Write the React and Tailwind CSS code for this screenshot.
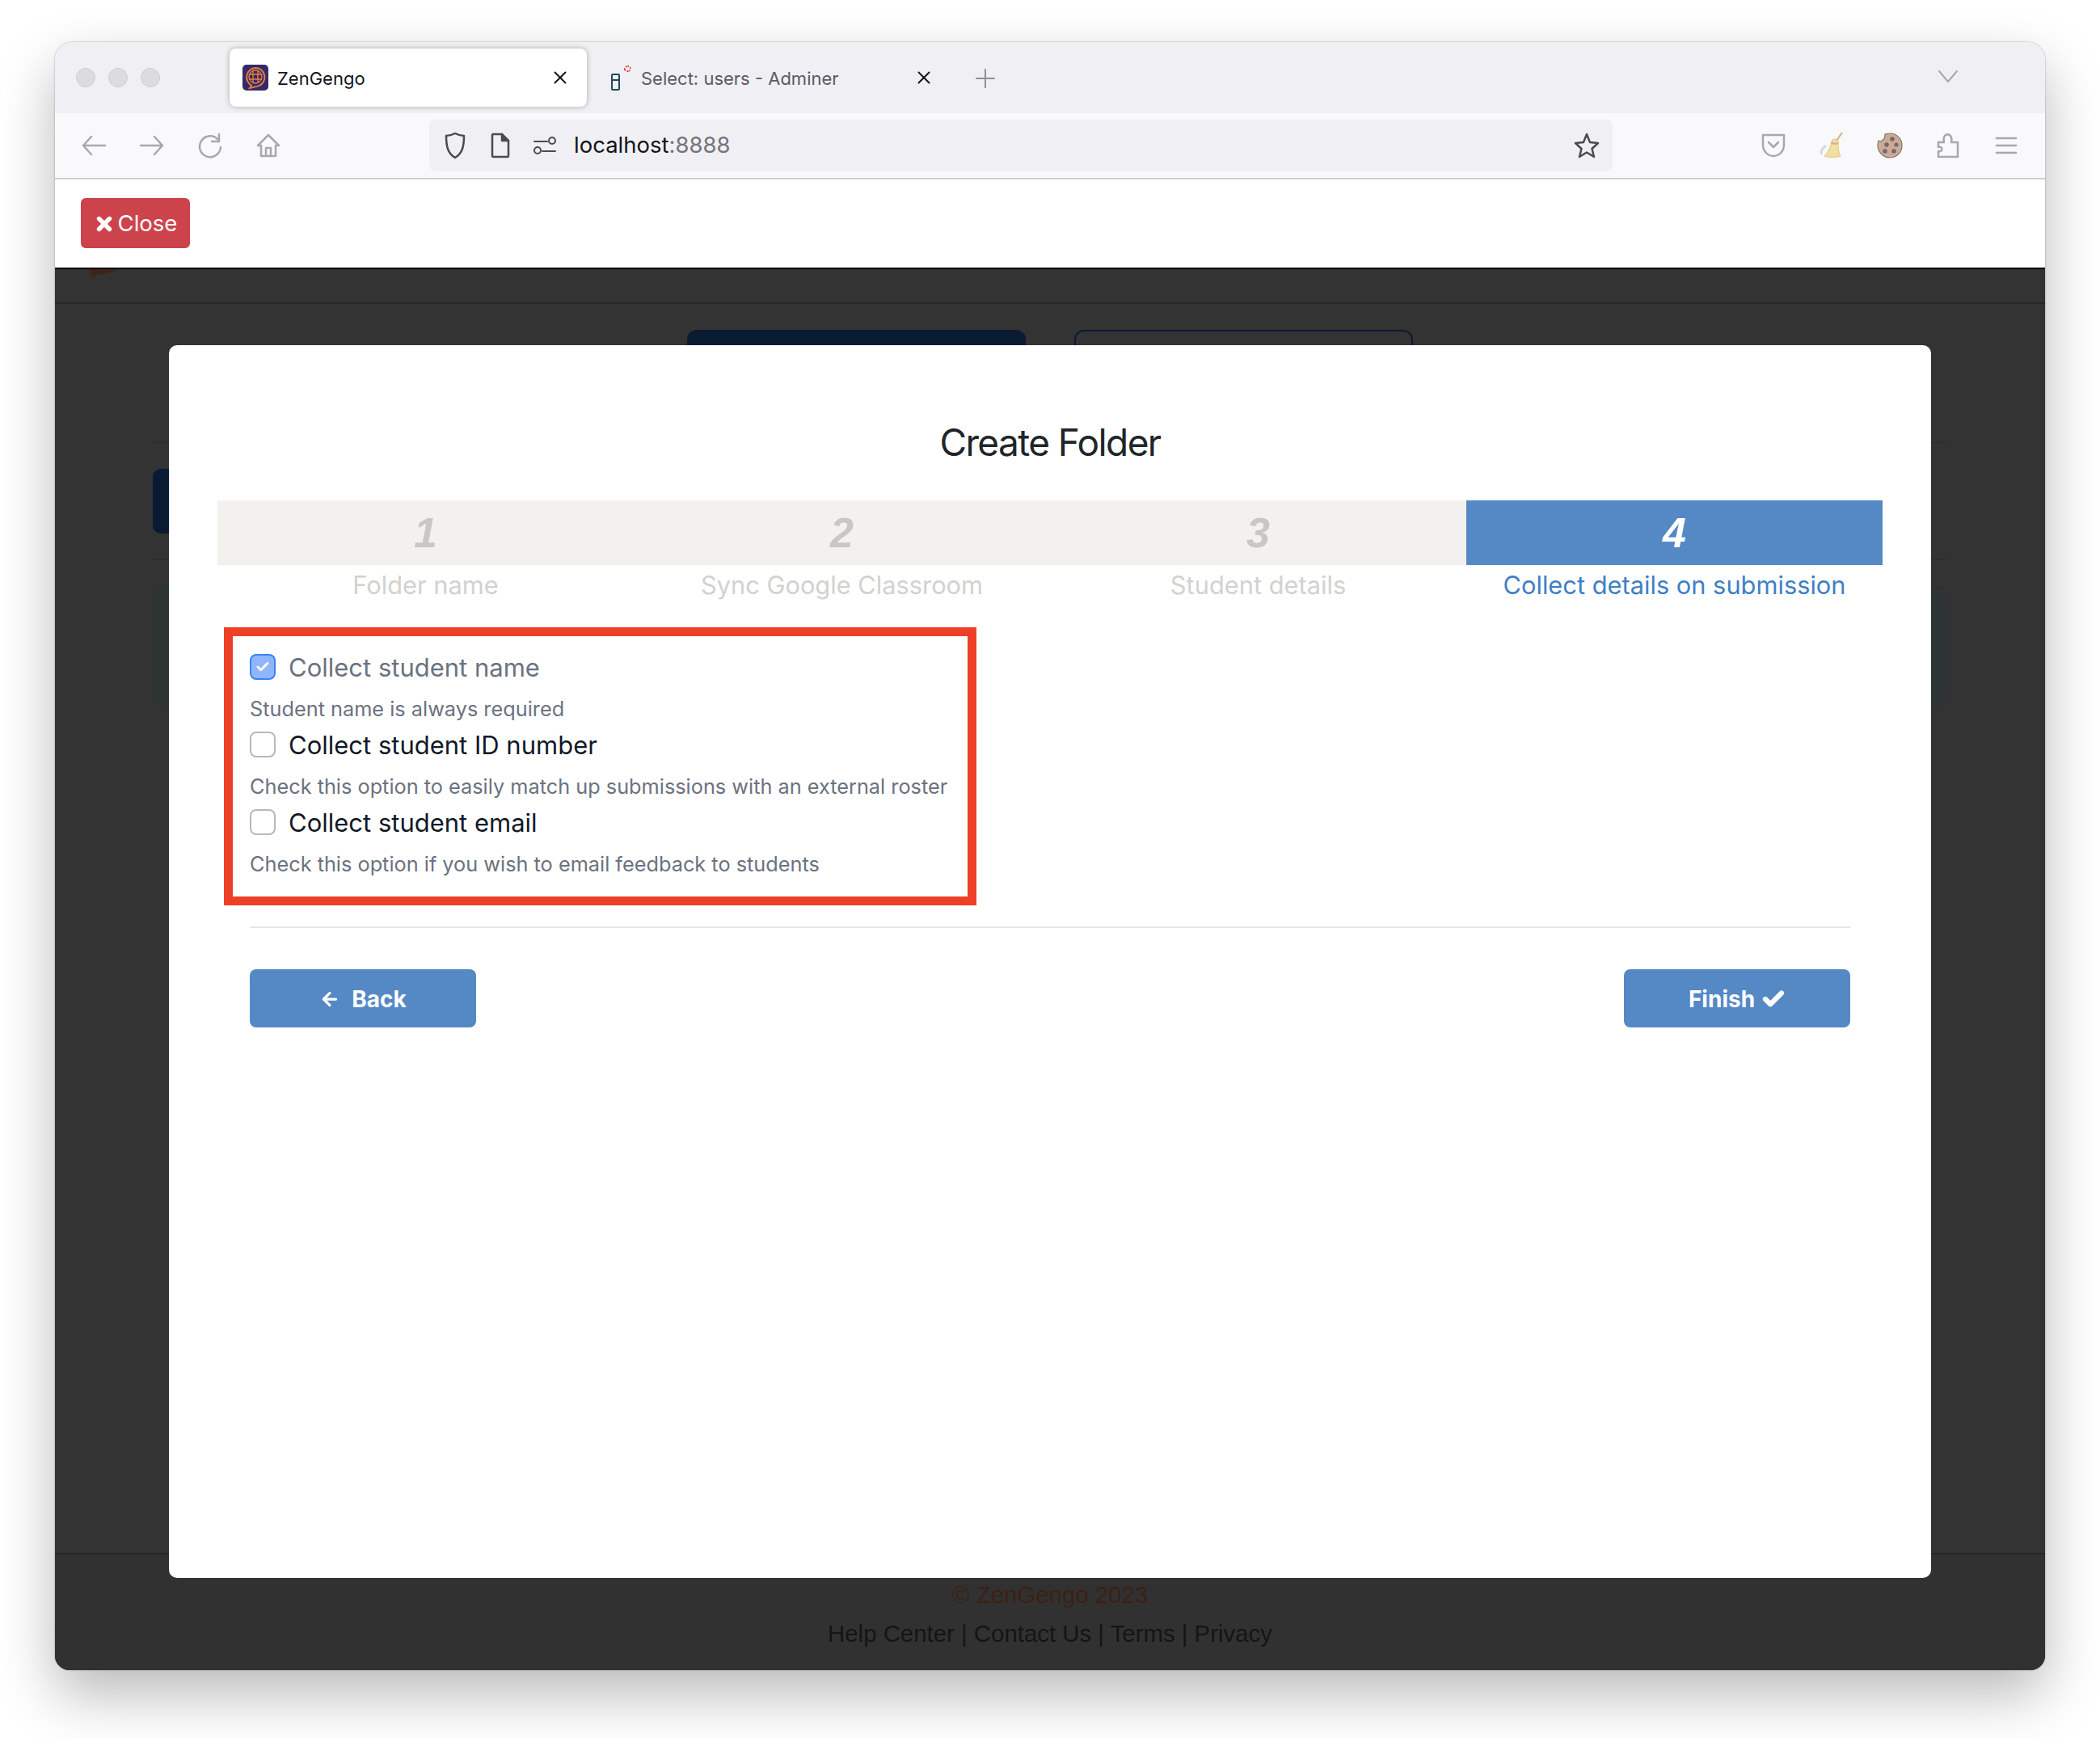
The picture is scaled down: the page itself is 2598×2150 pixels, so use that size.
import { Check, ArrowLeft, X } from "lucide-react";

const sans = "font-['Inter','Liberation_Sans',sans-serif]";

const steps = [
  { num: "1", label: "Folder name" },
  { num: "2", label: "Sync Google Classroom" },
  { num: "3", label: "Student details" },
  { num: "4", label: "Collect details on submission", active: true },
];

const options = [
  { title: "Collect student name", hint: "Student name is always required", checked: true },
  { title: "Collect student ID number", hint: "Check this option to easily match up submissions with an external roster" },
  { title: "Collect student email", hint: "Check this option if you wish to email feedback to students" },
];

const Favicon = () => (
  <svg width="32" height="32" viewBox="0 0 32 32" fill="none">
    <rect width="32" height="32" rx="5" fill="#33296b" />
    <path d="M16 4a11.5 11.5 0 0 1 3 22.6L9 29l2-3.5A11.5 11.5 0 0 1 16 4z" stroke="#ed7b3a" strokeWidth="2" />
    <circle cx="16" cy="15" r="8" stroke="#e8843c" strokeWidth="1.3" />
    <path d="M8 12h16M8 18h16M13 7.500v15M19 7.500v15" stroke="#e8843c" strokeWidth="1.300" />
  </svg>
);

const AdminerIcon = () => (
  <svg width="26" height="34" viewBox="0 0 26 34" fill="none">
    <rect x="2" y="13" width="9" height="19" rx="1" stroke="#1f4a5c" strokeWidth="2" />
    <path d="M2 20h9" stroke="#1f4a5c" strokeWidth="2" />
    <path d="M17 7l4-5 4 3-2 5z" stroke="#e0272b" strokeWidth="1.500" strokeDasharray="2 1.500" />
  </svg>
);

const Broom = () => (
  <svg width="32" height="34" viewBox="0 0 32 34" fill="none">
    <path d="M29 1l-7 10" stroke="#cdb27a" strokeWidth="2" />
    <path d="M17 10c4-2 7 0 7 2 0 6 0 13 3 18-6 2-14 2-20 0 5-4 8-13 10-20z" fill="#f1e0a0" stroke="#dcc67e" strokeWidth="1" />
    <path d="M15 13c3 2 6 2 9 1" stroke="#eda7a0" strokeWidth="2.500" />
    <path d="M4 28c-2-3 0-7 5-11" stroke="#d5dcd5" strokeWidth="3" />
  </svg>
);

const Cookie = () => (
  <svg width="32" height="32" viewBox="0 0 32 32">
    <path d="M10 2c2 0 3-1 6-1 8 0 15 6 15 15s-7 15-15 15S1 24 1 16c0-2 0-4 1-6 2 1 4 1 5-1 2 0 3-4 3-7z" fill="#ceaa96" stroke="#7b7570" strokeWidth="1.200" />
    <circle cx="19" cy="8" r="2.800" fill="#6f6b6b" />
    <circle cx="24" cy="15" r="2.600" fill="#6f6b6b" />
    <circle cx="12" cy="15" r="2.800" fill="#6f6b6b" />
    <circle cx="10" cy="23" r="2.800" fill="#6f6b6b" />
    <circle cx="21" cy="23" r="2.800" fill="#6f6b6b" />
  </svg>
);

const ToolIcon = ({ children, w = 32, h = 32, box = "0 0 32 32", color = "#a8a8ad", sw = 2.500 }) => (
  <svg width={w} height={h} viewBox={box} fill="none" stroke={color} strokeWidth={sw} strokeLinecap="round" strokeLinejoin="round">
    {children}
  </svg>
);

const Toolbar = () => (
  <div className="h-[82px] bg-[#f9f9fb] border-b-2 border-[#cfcfd2] flex items-center shrink-0">
    <div className="w-[463px] flex items-center pl-[32px] gap-[40px]">
      <ToolIcon><path d="M30 16H3M13 5L3 16l10 11" /></ToolIcon>
      <ToolIcon><path d="M2 16h27M19 5l10 11-10 11" /></ToolIcon>
      <ToolIcon><path d="M26 9a13 13 0 1 0 3 9M27 2v9h-9" /></ToolIcon>
      <ToolIcon><path d="M16 3L3 16h4v13h18V16h4zM13 29V19h6v10" /></ToolIcon>
    </div>
    <div className="w-[1464px] h-[64px] bg-[#f0f0f4] rounded-[8px] flex items-center pl-[19px] pr-[15px]">
      <ToolIcon w={26} h={34} box="0 0 26 34" color="#4a4a4f"><path d="M13 2c4 2 7 3 11 3 0 13-2 22-11 27C4 27 2 18 2 5c4 0 7-1 11-3z" /></ToolIcon>
      <div className="ml-[31px]">
        <ToolIcon w={24} h={32} box="0 0 24 32" color="#4a4a4f"><path d="M2 3a1 1 0 0 1 1-1h11l8 8v19a1 1 0 0 1-1 1H3a1 1 0 0 1-1-1z" /><path d="M14 2v8h8" fill="#4a4a4f" /></ToolIcon>
      </div>
      <div className="ml-[28px]">
        <ToolIcon w={30} h={24} box="0 0 30 24" color="#4a4a4f" sw={2}><path d="M2 7h16M12 19h16" /><circle cx="24" cy="6" r="4" /><circle cx="6" cy="18" r="4" /></ToolIcon>
      </div>
      <div className={`ml-[21px] text-[27.500px] leading-none text-[#15141a] ${sans}`}>
        localhost<span className="text-[#73737a]">:8888</span>
      </div>
      <div className="ml-auto">
        <ToolIcon w={34} h={34} box="0 0 34 34" color="#4a4a4f"><path d="M17 3l4 10 10 1-7.500 7 2.500 10-9-5.500L8 31l2.500-10L3 14l10-1z" /></ToolIcon>
      </div>
    </div>
    <div className="flex-1 relative h-full flex items-center pl-[183px] gap-[40px]">
      <ToolIcon><path d="M3 3h26v12c0 8-6 14-13 14S3 23 3 15zM10 12l6 6 6-6" /></ToolIcon>
      <Broom />
      <Cookie />
      <ToolIcon><path d="M4 12h7c-3-13 12-13 9 0h8v18H4v-7c6 2 6-7 0-5z" /></ToolIcon>
      <ToolIcon><path d="M4 7h24M4 16h24M4 25h24" /></ToolIcon>
    </div>
  </div>
);

const TabBar = () => (
  <div className="h-[88px] bg-[#f0f0f4] flex items-start shrink-0 relative">
    <div className="w-[216px] h-full flex items-center pl-[26px] gap-[16px]">
      <span className="w-[24px] h-[24px] rounded-full bg-[#dcdcdf] border border-[#cfcfd2]" />
      <span className="w-[24px] h-[24px] rounded-full bg-[#dcdcdf] border border-[#cfcfd2]" />
      <span className="w-[24px] h-[24px] rounded-full bg-[#dcdcdf] border border-[#cfcfd2]" />
    </div>
    <div className={`mt-[8px] w-[442px] h-[72px] bg-white rounded-[8px] shadow-[0_0_6px_rgba(0,0,0,0.3)] flex items-center pl-[16px] pr-[20px] ${sans}`}>
      <Favicon />
      <span className="ml-[11px] mt-[2px] text-[22px] text-[#15141a]">ZenGengo</span>
      <X className="ml-auto" size={26} color="#15141a" strokeWidth={1.800} />
    </div>
    <div className={`mt-[8px] w-[440px] h-[72px] flex items-center pl-[29px] pr-[10px] ${sans}`}>
      <AdminerIcon />
      <span className="ml-[12px] mt-[2px] text-[22px] text-[#5b5b66]">Select: users - Adminer</span>
      <X className="ml-auto" size={26} color="#15141a" strokeWidth={1.800} />
    </div>
    <div className="mt-[32px] ml-[40px]">
      <ToolIcon w={26} h={26} box="0 0 26 26" color="#8f8f94" sw={2}><path d="M13 2v22M2 13h22" /></ToolIcon>
    </div>
    <div className="ml-auto mt-[32px] mr-[107px]">
      <ToolIcon w={26} h={20} box="0 0 26 20" color="#a8a8ad" sw={2}><path d="M2 4l11 13L24 4" /></ToolIcon>
    </div>
  </div>
);

const Modal = () => (
  <div className={`absolute left-[141px] top-[94px] w-[2180px] h-[1525px] bg-white rounded-[10px] px-[60px] pt-[96px] ${sans}`}>
    <h1 className="text-center text-[46px] leading-[48px] h-[64px] tracking-[-1.600px] text-[#212529]">Create Folder</h1>
    <div className="grid grid-cols-4 mt-[32px]">
      {steps.map((step) => (
        <div key={step.num} className="flex flex-col items-center">
          <div className={`w-full h-[80px] flex items-center justify-center text-[52px] font-bold italic font-['Liberation_Sans',sans-serif] ${step.active ? "bg-[#5589c5] text-white" : "bg-[#f2f1ed] text-[#c7c7c3]"}`}>
            {step.num}
          </div>
          <div className={`mt-[7px] text-[30.800px] leading-[36px] ${step.active ? "text-[#3f7fc6]" : "text-[#d2d2cf]"}`}>{step.label}</div>
        </div>
      ))}
    </div>
    <div className="ml-[8px] mt-[34px] w-[931px] h-[344px] border-[11px] border-[#ee4027] pl-[21px] pt-[15px]">
      {options.map((opt) => (
        <div key={opt.title} className="h-[96px]">
          <div className="flex items-center h-[46px]">
            <div className={`w-[32px] h-[32px] rounded-[8px] border-2 flex items-center justify-center ${opt.checked ? "bg-[#8fb6fb] border-[#3b82f6]" : "bg-white border-[#b4b9c2]"}`}>
              {opt.checked && <Check size={18} color="#fff" strokeWidth={4} />}
            </div>
            <span className={`ml-[16px] text-[31px] leading-none ${opt.checked ? "text-[#6b7280]" : "text-[#111827]"}`}>{opt.title}</span>
          </div>
          <div className="mt-[10px] text-[25.300px] leading-[38px] whitespace-nowrap text-[#6b7280]">{opt.hint}</div>
        </div>
      ))}
    </div>
    <div className="mx-[40px] mt-[26px] h-[2px] bg-[#e5e5e5]" />
    <div className="mx-[40px] mt-[51px] flex justify-between">
      <button className="w-[280px] h-[72px] bg-[#5589c5] rounded-[8px] text-white text-[28px] font-bold pt-[2px] flex items-center justify-center gap-[14px]">
        <ArrowLeft size={26} strokeWidth={3} />
        Back
      </button>
      <button className="w-[280px] h-[72px] bg-[#5589c5] rounded-[8px] text-white text-[28px] font-bold pt-[2px] flex items-center justify-center gap-[8px]">
        Finish
        <Check size={30} strokeWidth={5} />
      </button>
    </div>
  </div>
);

const Backdrop = () => (
  <div className="relative flex-1 bg-[#333333] flex flex-col overflow-hidden">
    <div className="h-[43px] border-b-2 border-[#262626] shrink-0 relative">
      <svg className="absolute left-[40px] top-0" width="44" height="12" viewBox="0 0 44 12">
        <path d="M2 0l4 11 8-5c8 0 18-2 24-6z" fill="#3e2418" />
      </svg>
    </div>
    <div className="h-[32px] shrink-0" />
    <div className="flex gap-[60px] pl-[782px] shrink-0">
      <div className="w-[419px] h-[40px] bg-[#0a1a33] rounded-t-[12px]" />
      <div className="w-[419px] h-[40px] border-2 border-[#0a1a33] rounded-t-[12px]" />
    </div>
    <div className="ml-[121px] mt-[99px] w-[2220px] h-[1px] bg-[#2b2b2b]" />
    <div className="ml-[121px] mt-[32px] w-[60px] h-[80px] bg-[#0a1a33] rounded-[10px]" />
    <div className="ml-[121px] mt-[32px] w-[2220px] h-[1px] bg-[#2b2b2b]" />
    <div className="ml-[121px] w-[2220px] mt-[32px] h-[148px] bg-[#2e3333] rounded-[10px]" />
    <div className="mt-auto h-[145px] border-t-2 border-[#262626] bg-[#313131] shrink-0 flex flex-col items-center font-['Liberation_Sans',sans-serif]">
      <div className="mt-[32px] text-[29.400px] leading-[36px] text-[#3c2015]">© ZenGengo 2023</div>
      <div className="mt-[12px] text-[29.400px] leading-[36px] text-[#151515]">Help Center | Contact Us | Terms | Privacy</div>
    </div>
    <Modal />
  </div>
);

const App = () => (
  <div className="w-[2598px] h-[2150px] bg-white pt-[52px] px-[68px]">
    <div className="w-[2462px] h-[2014px] rounded-t-[22px] rounded-b-[18px] overflow-hidden flex flex-col shadow-[0_30px_70px_rgba(0,0,0,0.28),0_0_2px_rgba(0,0,0,0.4)]">
      <TabBar />
      <Toolbar />
      <div className="h-[111px] bg-white border-b-2 border-black pt-[23px] pl-[32px] shrink-0">
        <button className={`w-[135px] h-[62px] bg-[#cd434b] rounded-[6px] text-white text-[27.500px] pt-[2px] flex items-center justify-center gap-[4px] ${sans}`}>
          <X size={26} strokeWidth={5} />
          Close
        </button>
      </div>
      <Backdrop />
    </div>
  </div>
);

export default App;
